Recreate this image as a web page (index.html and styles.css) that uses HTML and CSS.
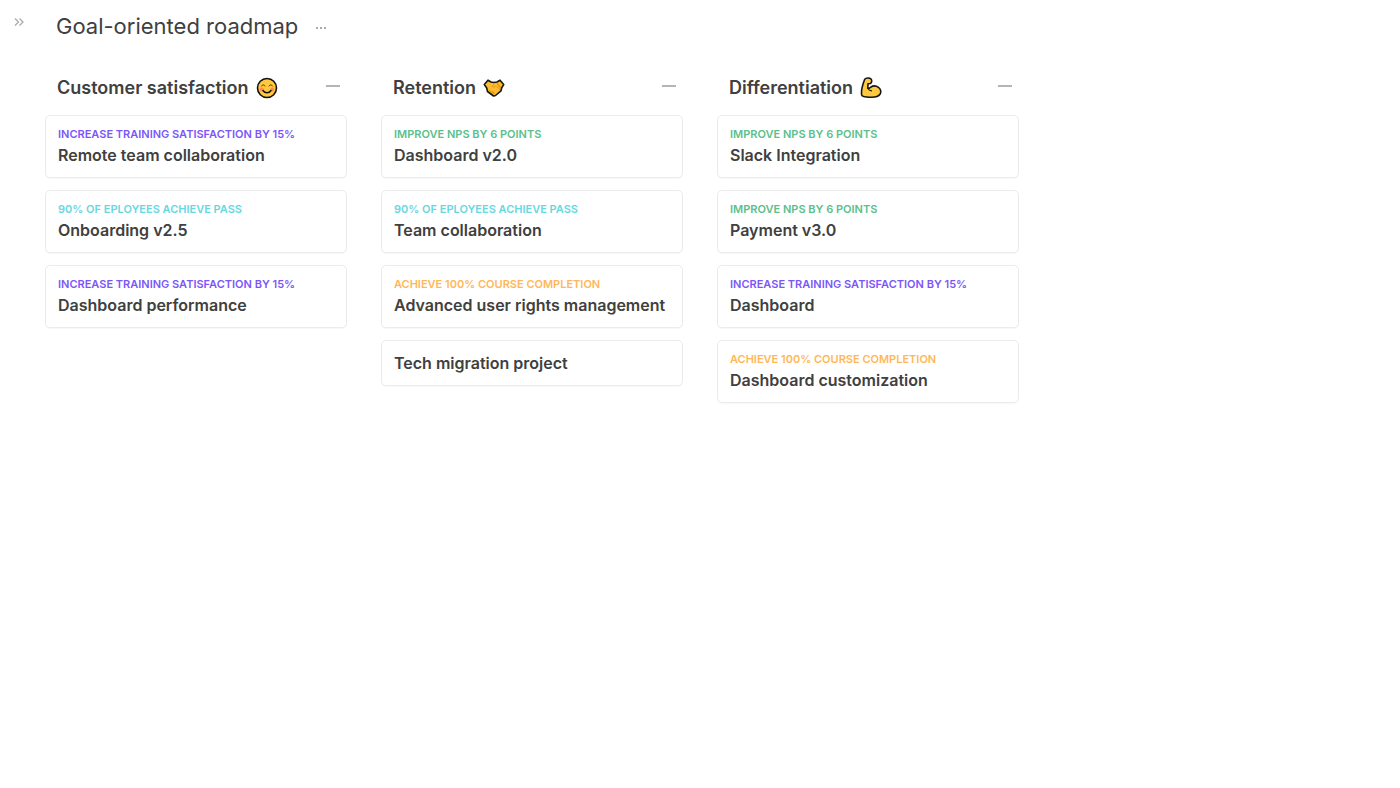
FILE: index.html
```html
<!DOCTYPE html>
<html lang="en">
<head>
<meta charset="utf-8">
<title>Goal-oriented roadmap</title>
<link rel="stylesheet" href="styles.css">
</head>
<body>
<header class="topbar">
  <button class="icon-button expand" aria-label="Expand sidebar"><svg width="10" height="10" viewBox="0 0 10 10"><path d="M1 1.500L4.500 5 1 8.500M5.500 1.500L9 5 5.500 8.500"/></svg></button>
  <h1 class="title">Goal-oriented roadmap</h1>
  <button class="icon-button more" aria-label="More options"><svg class="dots" width="12" height="4" viewBox="0 0 12 4"><path d="M1 1h2v2H1zM5 1h2v2H5zM9 1h2v2H9z"/></svg></button>
</header>
<main class="board">
  <section class="column">
    <div class="column-head"><h2 class="column-title">Customer satisfaction</h2>
      <svg class="emoji" width="22" height="22" viewBox="0 0 22 22"><circle cx="11" cy="11" r="9.500" fill="#ffc83d" stroke="#111" stroke-width="1.600"/><circle cx="5.700" cy="12.500" r="2" fill="#ff8b4a"/><circle cx="16.300" cy="12.500" r="2" fill="#ff8b4a"/><path d="M5.500 9c.8-1.600 2.700-1.600 3.500 0M13 9c.8-1.600 2.700-1.600 3.500 0" fill="none" stroke="#4a3815" stroke-width="1" stroke-linecap="round"/><path d="M7 13.500c2 3 6 3 8 0" fill="none" stroke="#111" stroke-width="1.400" stroke-linecap="round"/></svg>
      <button class="collapse" aria-label="Collapse Customer satisfaction"></button></div>
    <article class="card"><p class="goal purple">Increase training satisfaction by 15%</p><h3 class="name">Remote team collaboration</h3></article>
    <article class="card"><p class="goal cyan">90% of eployees achieve pass</p><h3 class="name">Onboarding v2.5</h3></article>
    <article class="card"><p class="goal purple">Increase training satisfaction by 15%</p><h3 class="name">Dashboard performance</h3></article>
  </section>
  <section class="column">
    <div class="column-head"><h2 class="column-title">Retention</h2>
      <svg class="emoji" width="22" height="22" viewBox="0 0 22 22"><path d="M1.300 7.500L5 3.200 8 5l3 .5L14 5l3-1.800 3.700 4.300-2 3.300-.7 3-5.500 4.700-2 .5L4.500 14.500l-.8-3.500z" fill="#ffbd2b" stroke="#171717" stroke-width="1.600" stroke-linejoin="round"/><path d="M14 5.800l3.500 5" stroke="#e38a13" stroke-width="1.200"/><path d="M11.500 6.500L9 9.500l1.500.8L13 9l4 3.500" fill="none" stroke="#e79a1d" stroke-width="1"/><path d="M6 13l5 4.300M9 14l3 2.500" fill="none" stroke="#e38a13"/></svg>
      <button class="collapse" aria-label="Collapse Retention"></button></div>
    <article class="card"><p class="goal green">Improve NPS by 6 points</p><h3 class="name">Dashboard v2.0</h3></article>
    <article class="card"><p class="goal cyan">90% of eployees achieve pass</p><h3 class="name">Team collaboration</h3></article>
    <article class="card"><p class="goal orange">Achieve 100% course completion</p><h3 class="name">Advanced user rights management</h3></article>
    <article class="card"><h3 class="name">Tech migration project</h3></article>
  </section>
  <section class="column">
    <div class="column-head"><h2 class="column-title">Differentiation</h2>
      <svg class="emoji" width="22" height="22" viewBox="0 0 22 22"><path d="M4.700 2.300C6 .8 9.500.5 11 2c1.200 1.500.8 3.600-.5 4.500L8 6.700l-.2 4.500c1.200.4 2.200-.2 3.200-1.200 2.300-1.500 5-1.300 7.500.3 2.500 1.700 2.800 5 1.500 7-1.700 2.700-5 3-9 2.900-4 0-8.500.3-9.300-2.200-.6-3 .8-10 3-15.700z" fill="#ffc83d" stroke="#151515" stroke-width="1.600" stroke-linejoin="round"/><path d="M8 11.500c.8 1.500 2 2.200 3.500 2.300" fill="none" stroke="#151515" stroke-width="1.200" stroke-linecap="round"/></svg>
      <button class="collapse" aria-label="Collapse Differentiation"></button></div>
    <article class="card"><p class="goal green">Improve NPS by 6 points</p><h3 class="name">Slack Integration</h3></article>
    <article class="card"><p class="goal green">Improve NPS by 6 points</p><h3 class="name">Payment v3.0</h3></article>
    <article class="card"><p class="goal purple">Increase training satisfaction by 15%</p><h3 class="name">Dashboard</h3></article>
    <article class="card"><p class="goal orange">Achieve 100% course completion</p><h3 class="name">Dashboard customization</h3></article>
  </section>
</main>
</body>
</html>
```
FILE: styles.css
```css
* { box-sizing: border-box; }
body { margin: 0; background: #fff; color: #404040; font-family: Inter, sans-serif; }
h1, h2, h3, p { margin: 0; }
button { border: 0; padding: 0; background: none; cursor: pointer; }
.topbar { display: flex; align-items: center; height: 52px; padding-left: 12px; }
.icon-button { display: grid; place-items: center; width: 14px; height: 20px; }
.icon-button svg { fill: none; stroke: #aaa; stroke-width: 1.3px; }
.icon-button .dots { fill: #aaa; stroke: none; }
.expand { margin-bottom: 8px; }
.title { margin: 0 16px 0 30px; font-size: 22px; font-weight: 400; line-height: 28px; }
.more { margin-top: 4px; }
.board { display: flex; align-items: flex-start; gap: 34px; padding: 16px 45px; }
.column { display: flex; flex-direction: column; gap: 12px; width: 302px; }
.column-head { display: flex; align-items: flex-start; height: 35px; padding: 8px 7px 0 12px; }
.column-title { font-size: 18px; font-weight: 600; line-height: 24px; }
.emoji { margin: 1px 0 0 7px; }
.collapse { width: 14px; height: 20px; margin-left: auto; }
.collapse::before { content: ""; display: block; height: 2px; background: #b5b5b5; }
.card { padding: 10px 12px; border: 1px solid #ebebeb; border-radius: 5px; box-shadow: 0 1px 1px #00000008; }
.goal { font-size: 11px; font-weight: 600; line-height: 16px; text-transform: uppercase; margin-bottom: 1px; }
.name { font-size: 16px; font-weight: 600; line-height: 24px; }
.purple { color: #7b57fa; }
.cyan { color: #68d8e0; }
.green { color: #5bc08c; }
.orange { color: #ffb758; }
```
